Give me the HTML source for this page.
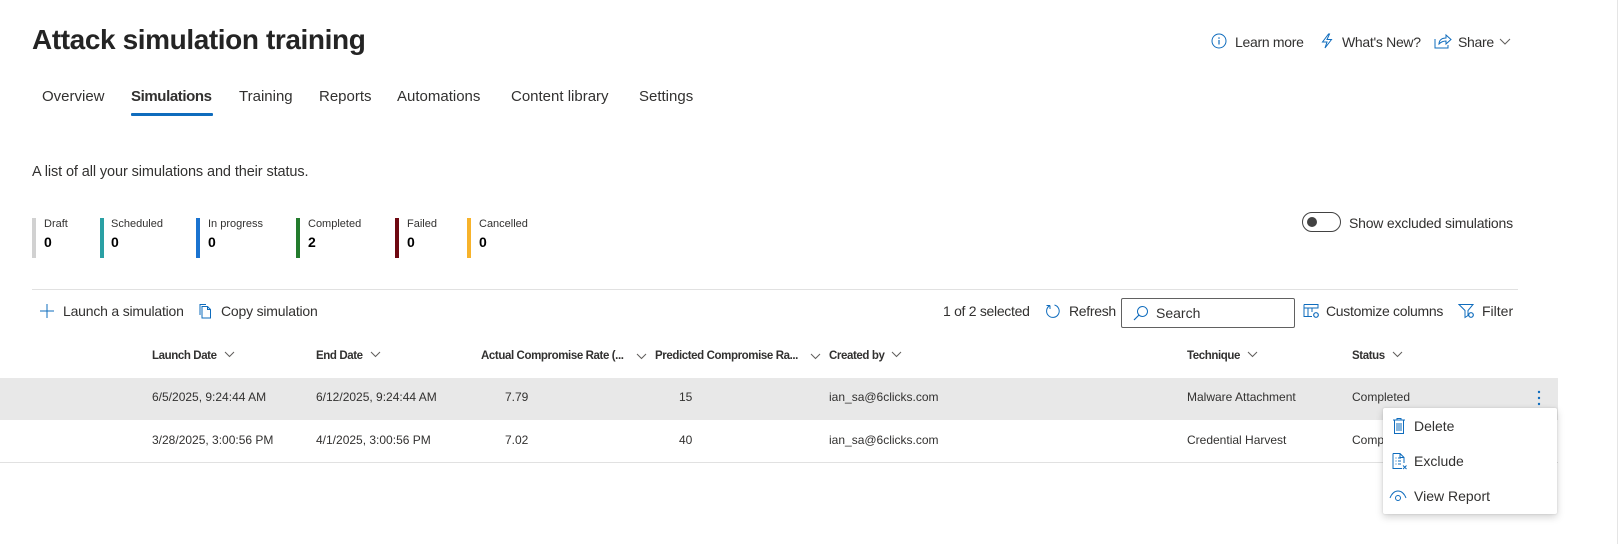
<!DOCTYPE html>
<html><head><meta charset="utf-8"><style>
*{margin:0;padding:0;box-sizing:border-box}
body{width:1620px;height:544px;background:#fff;position:relative;overflow:hidden;font-family:"Liberation Sans",sans-serif;color:#323130}
.t{position:absolute;white-space:nowrap;line-height:20px}
.bar{position:absolute;width:4px;height:40px;top:218px}
.lbl{position:absolute;font-size:11px;top:217px;line-height:14px;color:#323130}
.num{position:absolute;font-size:14px;font-weight:bold;top:234px;line-height:16px;color:#000}
.h{font-size:11.5px;font-weight:bold;color:#323130;top:346px;letter-spacing:-0.4px}
.c{font-size:12px;color:#323130}
svg{position:absolute}
.chev{display:inline-block;margin-left:7px;vertical-align:1px}
</style></head><body>
<div style="position:absolute;right:2px;top:0;width:1px;height:544px;background:#e5e5e5"></div>

<div class="t" style="left:32px;top:24px;font-size:28px;line-height:32px;font-weight:bold;color:#242424;letter-spacing:-0.4px">Attack simulation training</div>

<svg style="left:1211px;top:33px" width="16" height="16" viewBox="0 0 16 16"><circle cx="8" cy="8" r="7" fill="none" stroke="#0f6cbd" stroke-width="1"/><path d="M8 7v4.5" stroke="#0f6cbd" stroke-width="1.2"/><circle cx="8" cy="5" r=".8" fill="#0f6cbd"/></svg>
<div class="t" style="left:1235px;top:32px;font-size:14px;letter-spacing:-0.3px">Learn more</div>
<svg style="left:1319px;top:33px" width="16" height="16" viewBox="0 0 16 16"><path d="M9.5 1L3.5 9h4.5l-2 6 6.5-8.5h-4.5L10.5 1z" fill="none" stroke="#0f6cbd" stroke-width="1"/></svg>
<div class="t" style="left:1342px;top:32px;font-size:14px;letter-spacing:-0.3px">What's New?</div>
<svg style="left:1434px;top:33px" width="18" height="16" viewBox="0 0 18 16"><path d="M1 6v9h13v-3M5 11c0-4 3-6 7-6V2l5 4.5-5 4.5V8c-3 0-5 1-7 3z" fill="none" stroke="#0f6cbd" stroke-width="1"/></svg>
<div class="t" style="left:1458px;top:32px;font-size:14px;letter-spacing:-0.3px">Share</div>
<svg style="left:1499px;top:38px" width="12" height="8" viewBox="0 0 12 8"><path d="M1 1l5 5 5-5" fill="none" stroke="#605e5c" stroke-width="1"/></svg>

<div class="t" style="left:42px;top:87px;font-size:15px">Overview</div>
<div class="t" style="left:131px;top:87px;font-size:15px;font-weight:bold;letter-spacing:-0.4px">Simulations</div>
<div style="position:absolute;left:131px;top:113px;width:82px;height:3px;background:#0f6cbd;border-radius:1px"></div>
<div class="t" style="left:239px;top:87px;font-size:15px">Training</div>
<div class="t" style="left:319px;top:87px;font-size:15px">Reports</div>
<div class="t" style="left:397px;top:87px;font-size:15px">Automations</div>
<div class="t" style="left:511px;top:87px;font-size:15px">Content library</div>
<div class="t" style="left:639px;top:87px;font-size:15px">Settings</div>

<div class="t" style="left:32px;top:162px;font-size:14.5px;letter-spacing:-0.1px">A list of all your simulations and their status.</div>

<div class="bar" style="left:32px;background:#d1d1d1"></div><div class="lbl" style="left:44px">Draft</div><div class="num" style="left:44px">0</div>
<div class="bar" style="left:100px;background:#2aa0a4"></div><div class="lbl" style="left:111px">Scheduled</div><div class="num" style="left:111px">0</div>
<div class="bar" style="left:196px;background:#1a73d0"></div><div class="lbl" style="left:208px">In progress</div><div class="num" style="left:208px">0</div>
<div class="bar" style="left:296px;background:#237b2d"></div><div class="lbl" style="left:308px">Completed</div><div class="num" style="left:308px">2</div>
<div class="bar" style="left:395px;background:#6e0811"></div><div class="lbl" style="left:407px">Failed</div><div class="num" style="left:407px">0</div>
<div class="bar" style="left:467px;background:#f7b32b"></div><div class="lbl" style="left:479px">Cancelled</div><div class="num" style="left:479px">0</div>

<div style="position:absolute;left:1302px;top:212px;width:39px;height:20px;border:1px solid #424242;border-radius:10px"></div>
<div style="position:absolute;left:1307px;top:217px;width:10px;height:10px;border-radius:5px;background:#424242"></div>
<div class="t" style="left:1349px;top:213px;font-size:14px;letter-spacing:-0.2px">Show excluded simulations</div>

<div style="position:absolute;left:32px;top:289px;width:1486px;height:1px;background:#e1e1e1"></div>

<svg style="left:39px;top:303px" width="16" height="16" viewBox="0 0 16 16"><path d="M8 1v14M1 8h14" stroke="#0f6cbd" stroke-width="1"/></svg>
<div class="t" style="left:63px;top:301px;font-size:14px;letter-spacing:-0.2px">Launch a simulation</div>
<svg style="left:197px;top:303px" width="16" height="16" viewBox="0 0 16 16"><path d="M5 3.5h5.5l3 3V15H5zM10.5 3.5v3h3M3 12V1.5h6" fill="none" stroke="#0f6cbd" stroke-width="1"/></svg>
<div class="t" style="left:221px;top:301px;font-size:14px;letter-spacing:-0.2px">Copy simulation</div>
<div class="t" style="left:943px;top:301px;font-size:14px;letter-spacing:-0.3px">1 of 2 selected</div>
<svg style="left:1045px;top:303px" width="16" height="16" viewBox="0 0 16 16"><path d="M5 2.5A6.3 6.3 0 1 0 9.5 2M5 2.5V6M5 2.5H1.5" fill="none" stroke="#0f6cbd" stroke-width="1"/></svg>
<div class="t" style="left:1069px;top:301px;font-size:14px;letter-spacing:-0.3px">Refresh</div>
<div style="position:absolute;left:1121px;top:298px;width:174px;height:30px;border:1px solid #616161;border-radius:2px"></div>
<svg style="left:1133px;top:305px" width="16" height="16" viewBox="0 0 16 16"><circle cx="9.5" cy="6.5" r="5" fill="none" stroke="#0f6cbd" stroke-width="1"/><path d="M6 10l-5 5" stroke="#0f6cbd" stroke-width="1.2"/></svg>
<div class="t" style="left:1156px;top:303px;font-size:14px">Search</div>
<svg style="left:1303px;top:303px" width="18" height="16" viewBox="0 0 18 16"><path d="M1 1.5h14v4M1 1.5v12h8M1 5h14M5 5v8.5M9 5v4" fill="none" stroke="#0f6cbd" stroke-width="1"/><circle cx="13" cy="12" r="2.3" fill="none" stroke="#0f6cbd" stroke-width="1.2"/></svg>
<div class="t" style="left:1326px;top:301px;font-size:14px;letter-spacing:-0.3px">Customize columns</div>
<svg style="left:1458px;top:303px" width="18" height="16" viewBox="0 0 18 16"><path d="M1 1.5h14l-5 6v5l-3 2v-7z" fill="none" stroke="#0f6cbd" stroke-width="1"/><circle cx="13" cy="12" r="2.3" fill="none" stroke="#0f6cbd" stroke-width="1.2"/></svg>
<div class="t" style="left:1482px;top:301px;font-size:14px">Filter</div>

<div class="t h" style="left:152px">Launch Date<svg class="chev" style="position:static" width="11" height="7" viewBox="0 0 11 7"><path d="M1 1l4.5 4.5L10 1" fill="none" stroke="#605e5c"/></svg></div>
<div class="t h" style="left:316px">End Date<svg class="chev" style="position:static" width="11" height="7" viewBox="0 0 11 7"><path d="M1 1l4.5 4.5L10 1" fill="none" stroke="#605e5c"/></svg></div>
<div class="t h" style="left:481px">Actual Compromise Rate (...</div>
<svg style="left:636px;top:353px" width="11" height="7" viewBox="0 0 11 7"><path d="M1 1l4.5 4.5L10 1" fill="none" stroke="#605e5c"/></svg>
<div class="t h" style="left:655px">Predicted Compromise Ra...</div>
<svg style="left:810px;top:353px" width="11" height="7" viewBox="0 0 11 7"><path d="M1 1l4.5 4.5L10 1" fill="none" stroke="#605e5c"/></svg>
<div class="t h" style="left:829px">Created by<svg class="chev" style="position:static" width="11" height="7" viewBox="0 0 11 7"><path d="M1 1l4.5 4.5L10 1" fill="none" stroke="#605e5c"/></svg></div>
<div class="t h" style="left:1187px">Technique<svg class="chev" style="position:static" width="11" height="7" viewBox="0 0 11 7"><path d="M1 1l4.5 4.5L10 1" fill="none" stroke="#605e5c"/></svg></div>
<div class="t h" style="left:1352px">Status<svg class="chev" style="position:static" width="11" height="7" viewBox="0 0 11 7"><path d="M1 1l4.5 4.5L10 1" fill="none" stroke="#605e5c"/></svg></div>

<div style="position:absolute;left:0;top:378px;width:1558px;height:42px;background:#e8e8e8"></div>
<div style="position:absolute;left:0;top:462px;width:1558px;height:1px;background:#e1e1e1"></div>

<div class="t c" style="left:152px;top:387px">6/5/2025, 9:24:44 AM</div>
<div class="t c" style="left:316px;top:387px">6/12/2025, 9:24:44 AM</div>
<div class="t c" style="left:505px;top:387px">7.79</div>
<div class="t c" style="left:679px;top:387px">15</div>
<div class="t c" style="left:829px;top:387px">ian_sa@6clicks.com</div>
<div class="t c" style="left:1187px;top:387px">Malware Attachment</div>
<div class="t c" style="left:1352px;top:387px">Completed</div>
<svg style="left:1536px;top:390px" width="6" height="16" viewBox="0 0 6 16"><circle cx="3" cy="2" r="1.2" fill="#0f6cbd"/><circle cx="3" cy="8" r="1.2" fill="#0f6cbd"/><circle cx="3" cy="14" r="1.2" fill="#0f6cbd"/></svg>

<div class="t c" style="left:152px;top:430px">3/28/2025, 3:00:56 PM</div>
<div class="t c" style="left:316px;top:430px">4/1/2025, 3:00:56 PM</div>
<div class="t c" style="left:505px;top:430px">7.02</div>
<div class="t c" style="left:679px;top:430px">40</div>
<div class="t c" style="left:829px;top:430px">ian_sa@6clicks.com</div>
<div class="t c" style="left:1187px;top:430px">Credential Harvest</div>
<div class="t c" style="left:1352px;top:430px">Completed</div>

<div style="position:absolute;left:1383px;top:408px;width:174px;height:106px;background:#fff;border-radius:2px;box-shadow:0 3px 8px rgba(0,0,0,.18),0 0 2px rgba(0,0,0,.12)">
<svg style="left:8px;top:9px" width="16" height="18" viewBox="0 0 16 18"><path d="M2 3h12M6 3V1.5h4V3M3.5 3v13.5h9V3M6 6v8M8 6v8M10 6v8" fill="none" stroke="#0f6cbd" stroke-width="1"/></svg>
<div class="t" style="left:31px;top:8px;font-size:14px">Delete</div>
<svg style="left:8px;top:44px" width="18" height="18" viewBox="0 0 18 18"><path d="M2 1.5h7l4 4V11M2 1.5v15h9M9 1.5v4h4M4.5 6h1M7 6h3M4.5 9h1M7 9h3M4.5 12h1M7 12h3M12 13.5l3.5 3.5M15.5 13.5L12 17" fill="none" stroke="#0f6cbd" stroke-width="1"/></svg>
<div class="t" style="left:31px;top:43px;font-size:14px">Exclude</div>
<svg style="left:6px;top:81px" width="18" height="14" viewBox="0 0 18 14"><path d="M1 9c2-5 5-7 8-7s6 2 8 7" fill="none" stroke="#0f6cbd" stroke-width="1"/><circle cx="9" cy="9" r="2.5" fill="none" stroke="#0f6cbd" stroke-width="1"/></svg>
<div class="t" style="left:31px;top:78px;font-size:14px">View Report</div>
</div>
</body></html>
